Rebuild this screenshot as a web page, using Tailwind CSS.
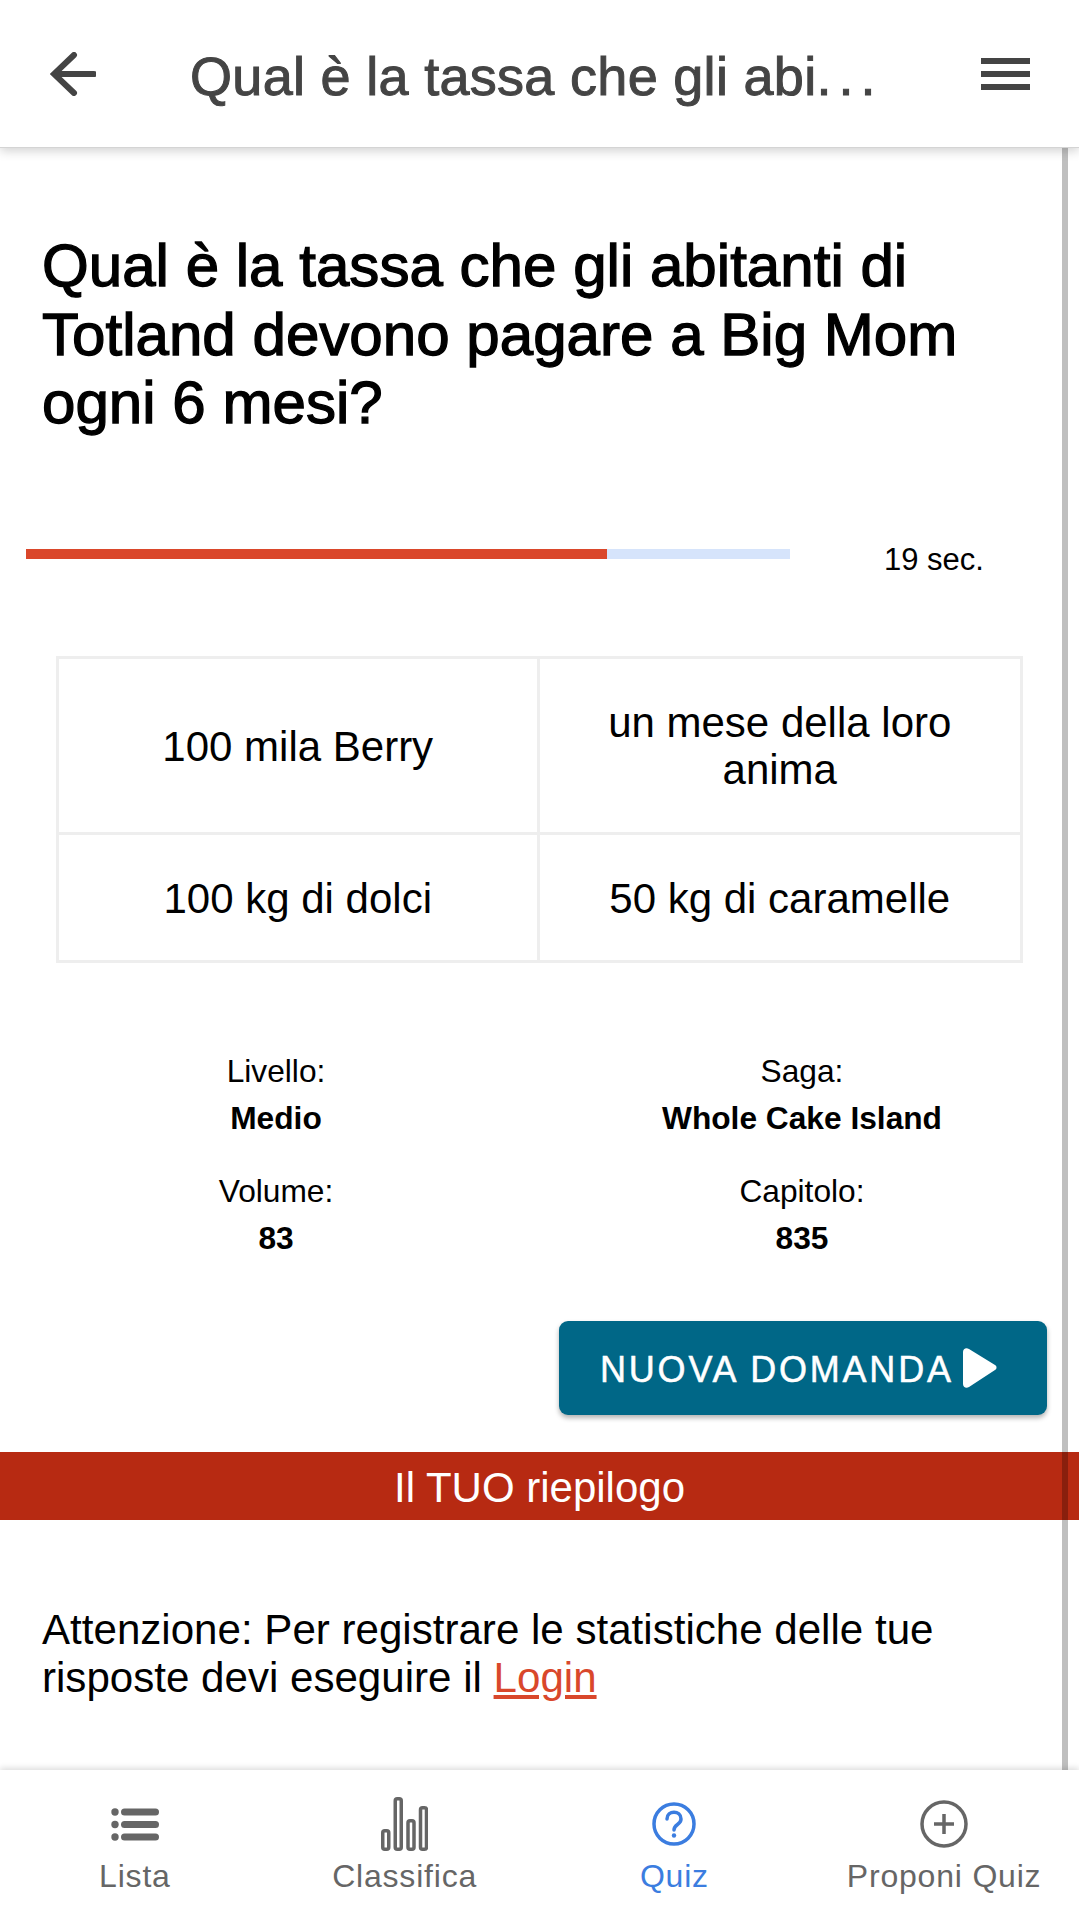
<!DOCTYPE html>
<html lang="it">
<head>
  <meta charset="UTF-8" />
  <meta name="viewport" content="width=device-width, initial-scale=1.0" />
  <title>Quiz</title>
  <script src="https://cdn.jsdelivr.net/npm/@tailwindcss/browser@4"></script>
</head>
<body class="bg-white font-['Liberation_Sans',sans-serif] text-black">
  <div class="relative flex flex-col w-[1079px] h-[1919px] overflow-hidden">
    <!-- header -->
    <header class="relative z-10 flex items-center h-[148px] shrink-0 bg-white border-b border-[#d4d4d4] shadow-[0_3px_10px_rgba(0,0,0,0.18)]">
      <div class="w-[190px] pl-[50px] shrink-0">
        <svg width="46" height="44" viewBox="0 0 46 44" fill="none" stroke="#444" stroke-width="6" stroke-linecap="round"><path d="M44 22H5M24 3L4 22l20 19"/></svg>
      </div>
      <div class="w-[700px] mt-[4px] whitespace-nowrap text-[54px] leading-[60px] tracking-[0.3px] text-[#444] [-webkit-text-stroke:1px_#444]">Qual è la tassa che gli abi<span class="tracking-[7px]">...</span></div>
      <div class="flex flex-col gap-[7px] ml-[91px] w-[49px]">
        <div class="h-[6px] bg-[#444]"></div>
        <div class="h-[6px] bg-[#444]"></div>
        <div class="h-[6px] bg-[#444]"></div>
      </div>
    </header>

    <!-- content -->
    <main class="flex-1 flex flex-col">
      <h1 class="mt-[84px] px-[42px] text-[60.1px] leading-[68.5px] font-normal [-webkit-text-stroke:1.3px_#000]">Qual è la tassa che gli abitanti di Totland devono pagare a Big Mom ogni 6 mesi?</h1>

      <div class="flex items-start mt-[111px] pl-[26px]">
        <div class="w-[764px] h-[10px] bg-[#d6e4fb]">
          <div class="w-[581px] h-[10px] bg-[#da472b]"></div>
        </div>
        <div class="ml-[94px] text-[31px] leading-[36px] -mt-[7px]">19 sec.</div>
      </div>

      <div class="grid grid-cols-2 grid-rows-[176px_125px] mt-[78px] mx-[56px] w-[967px] border-[3px] border-[#eeeeee] text-[42px] leading-[47px] text-center">
        <div class="flex items-center justify-center px-6 pt-[2px] border-r-[3px] border-b-[3px] border-[#eeeeee]">100 mila Berry</div>
        <div class="flex items-center justify-center px-6 pt-[2px] border-b-[3px] border-[#eeeeee]">un mese della loro anima</div>
        <div class="flex items-center justify-center px-6 pt-[2px] border-r-[3px] border-[#eeeeee]">100 kg di dolci</div>
        <div class="flex items-center justify-center px-6 pt-[2px]">50 kg di caramelle</div>
      </div>

      <div class="grid grid-cols-2 gap-y-[25px] mt-[85px] mx-[13px] w-[1052px] text-[31.7px] leading-[47.5px] text-center">
        <div>Livello:<div class="font-bold">Medio</div></div>
        <div>Saga:<div class="font-bold">Whole Cake Island</div></div>
        <div>Volume:<div class="font-bold">83</div></div>
        <div>Capitolo:<div class="font-bold">835</div></div>
      </div>

      <div class="flex justify-end mt-[58px] pr-[32px]">
        <button class="flex items-center h-[94px] w-[488px] pl-[41px] rounded-[9px] bg-[#006787] text-white text-[36px] tracking-[2.8px] [-webkit-text-stroke:0.5px_#fff] shadow-[0_3px_5px_rgba(0,0,0,0.3)]">
          <span class="mt-[4px]">NUOVA DOMANDA</span>
          <svg class="ml-[9px]" width="34" height="40" viewBox="0 0 34 40" fill="#fff"><path d="M0 4c0-3 3-5 6-3l26 16c2 1 2 4 0 5L6 39c-3 2-6 0-6-3z"/></svg>
        </button>
      </div>

      <div class="mt-[37px] h-[68px] pt-[3px] flex items-center justify-center bg-[#b72a12] text-white text-[42px]">Il TUO riepilogo</div>

      <p class="mt-[86px] px-[42px] text-[42.1px] leading-[48px]">Attenzione: Per registrare le statistiche delle tue risposte devi eseguire il <a class="text-[#d9472b] underline" href="#">Login</a></p>
    </main>

    <!-- bottom nav -->
    <nav class="relative z-10 grid grid-cols-4 h-[149px] shrink-0 bg-white shadow-[0_-2px_6px_rgba(0,0,0,0.14)] text-[32px] tracking-[0.8px] text-[#666] text-center">
      <div class="flex flex-col items-center">
        <div class="h-[84px] flex items-center pt-[24px]">
          <svg width="48" height="33" viewBox="0 0 48 33" fill="#666"><circle cx="4" cy="4" r="3.7"/><rect x="10" y="0.5" width="38" height="7" rx="3.5"/><circle cx="4" cy="16.5" r="3.7"/><rect x="10" y="13" width="38" height="7" rx="3.5"/><circle cx="4" cy="29" r="3.7"/><rect x="10" y="25.5" width="38" height="7" rx="3.5"/></svg>
        </div>
        <span class="-mt-[2px]">Lista</span>
      </div>
      <div class="flex flex-col items-center">
        <div class="h-[84px] flex items-end pb-[3px]">
          <svg width="47" height="54" viewBox="0 0 47 54" fill="none" stroke="#666" stroke-width="3.5"><rect x="1.75" y="33.75" width="6" height="18.5" rx="2"/><rect x="14.25" y="1.75" width="6" height="50.5" rx="2"/><rect x="27" y="23.75" width="6" height="28.5" rx="2"/><rect x="39.5" y="10.75" width="6" height="41.5" rx="2"/></svg>
        </div>
        <span class="-mt-[2px]">Classifica</span>
      </div>
      <div class="flex flex-col items-center text-[#3b7de0]">
        <div class="h-[84px] flex items-center pt-[24px]">
          <svg width="44" height="44" viewBox="0 0 44 44" fill="none" stroke="#3b7de0" stroke-width="3.5"><circle cx="22" cy="22" r="20"/><path d="M15 17c0-9 14-9 14 0 0 6-7 5-7 11" stroke-linecap="round"/><circle cx="22" cy="33.5" r="2.2" fill="#3b7de0" stroke="none"/></svg>
        </div>
        <span class="-mt-[2px]">Quiz</span>
      </div>
      <div class="flex flex-col items-center">
        <div class="h-[84px] flex items-center pt-[24px]">
          <svg width="48" height="48" viewBox="0 0 48 48" fill="none" stroke="#666" stroke-width="3.5"><circle cx="24" cy="24" r="22"/><path d="M24 14v20M14 24h20"/></svg>
        </div>
        <span class="-mt-[2px]">Proponi Quiz</span>
      </div>
    </nav>

    <!-- scrollbar overlay -->
    <div class="absolute z-20 left-[1062px] top-[148px] w-[6px] h-[1622px] bg-black/25"></div>
  </div>
</body>
</html>
